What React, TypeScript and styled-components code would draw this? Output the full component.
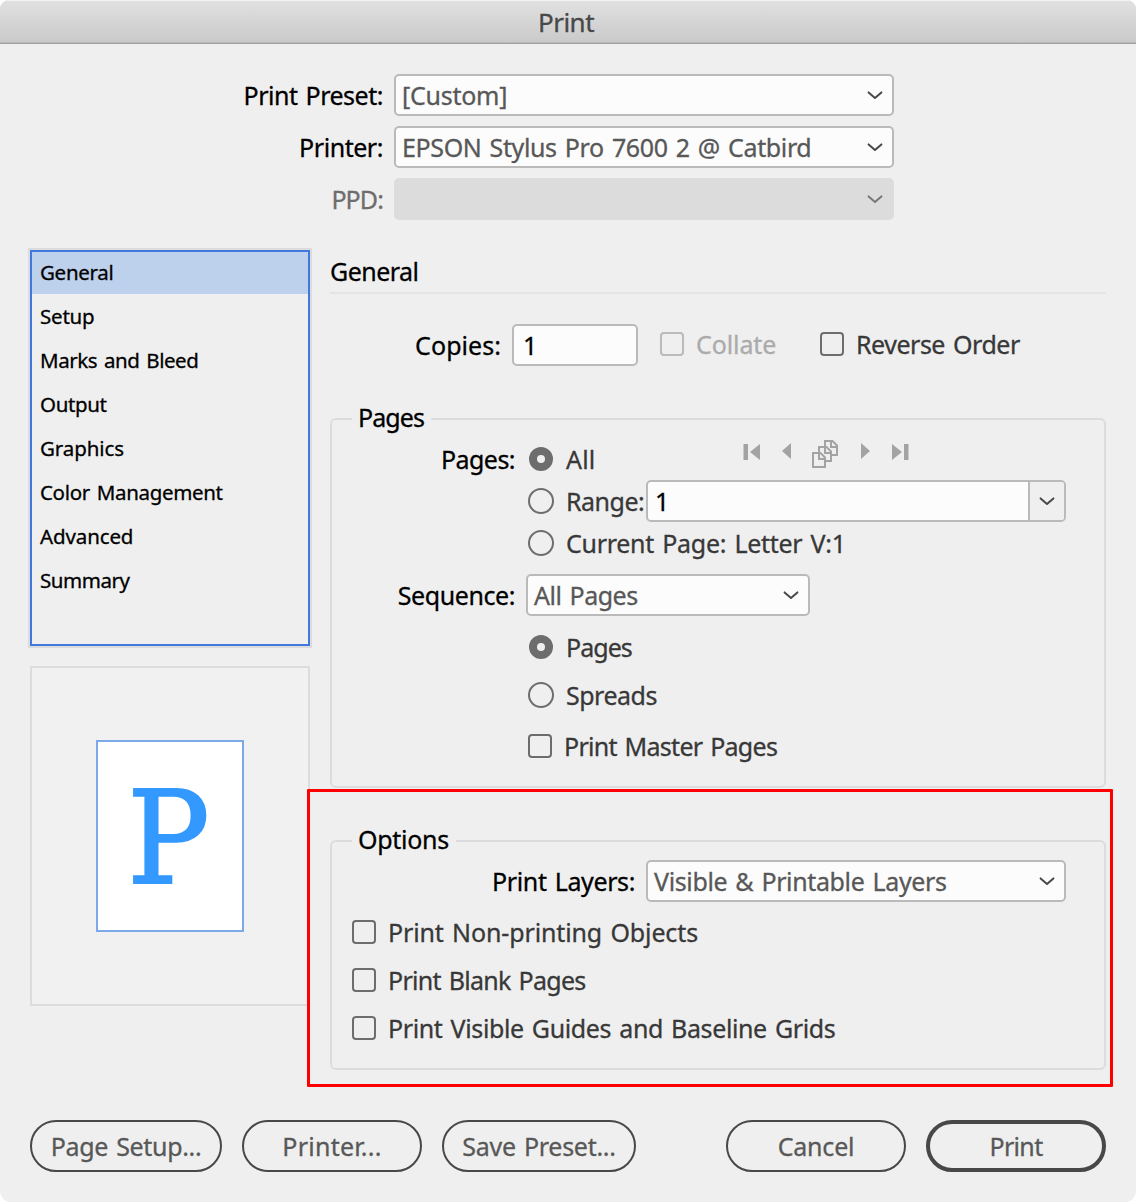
import React from "react";
import styled, { createGlobalStyle, css } from "styled-components";

const GlobalStyle = createGlobalStyle`
  * { box-sizing: border-box; }
  body {
    margin: 0;
    background: #fff;
    font-family: "Noto Sans", "Open Sans", sans-serif;
    font-size: 25px;
    line-height: 34px;
    color: #000;
  }
`;

const Dialog = styled.div`
  width: 1136px;
  height: 1202px;
  background: #efefef;
  border-radius: 9px 9px 11px 11px;
  overflow: hidden;
`;

const TitleBar = styled.header`
  display: flex;
  justify-content: center;
  height: 44px;
  padding-right: 4px;
  line-height: 44px;
  font-size: 26px;
  color: #484848;
  background: linear-gradient(#e1e1e1, #c9c9c9);
  box-shadow: inset 0 1px 0 #f4f4f4, inset 0 -1px 0 #a0a0a0, inset 0 -2px 0 #b9b9b9;
`;

const Text = styled.span<{ $ls?: number; $color?: string }>`
  white-space: pre;
  letter-spacing: ${(p) => p.$ls ?? 0}px;
  word-spacing: 2px;
  color: ${(p) => p.$color ?? "#000"};
  -webkit-text-stroke: 0.3px currentColor;
`;

const Body = styled.main`
  padding: 30px;
`;

const PresetGrid = styled.section`
  display: grid;
  grid-template-columns: 354px 500px;
  grid-auto-rows: 42px;
  gap: 10px;
  align-items: center;
`;

const Label = styled.div<{ $width?: number }>`
  display: flex;
  flex: none;
  justify-content: flex-end;
  width: ${(p) => (p.$width ? `${p.$width}px` : "auto")};
  padding-right: 1px;
`;

const boxed = css`
  height: 42px;
  border: 2px solid #bababa;
  border-radius: 5px;
  background: #fcfcfc;
`;

const SelectBox = styled.div<{ $width: number; $disabled?: boolean; $shift?: number }>`
  ${boxed}
  display: flex;
  flex: none;
  align-items: center;
  justify-content: space-between;
  width: ${(p) => p.$width}px;
  margin-left: ${(p) => p.$shift ?? 0}px;
  padding: 0 9px 0 6px;
  ${(p) => p.$disabled && "background: #dcdcdc; border-color: #dcdcdc;"}
`;

const NumberField = styled.div`
  ${boxed}
  display: flex;
  align-items: center;
  width: 126px;
  margin: 0 22px 0 10px;
  padding-left: 9px;
`;

const ComboField = styled.div`
  ${boxed}
  display: flex;
  align-items: stretch;
  width: 420px;
  overflow: hidden;
`;

const ComboInput = styled.div`
  display: flex;
  flex: 1;
  align-items: center;
  padding-left: 7px;
`;

const ComboButton = styled.div`
  display: flex;
  align-items: center;
  justify-content: center;
  width: 36px;
  border-left: 2px solid #bababa;
  background: #efefef;
`;

const Columns = styled.div`
  display: flex;
  gap: 20px;
  margin-top: 30px;
`;

const Sidebar = styled.aside`
  display: flex;
  flex: none;
  flex-direction: column;
  gap: 20px;
  width: 280px;
`;

const CategoryList = styled.nav`
  height: 396px;
  border: 2px solid #4178e0;
  box-shadow: 0 0 0 2px #dcdcdc;
  font-size: 20.5px;
`;

const Category = styled.div<{ $active?: boolean }>`
  height: ${(p) => (p.$active ? 42 : 44)}px;
  line-height: ${(p) => (p.$active ? 40 : 44)}px;
  padding-left: 8px;
  background: ${(p) => (p.$active ? "#bdd0ec" : "transparent")};
`;

const Preview = styled.div`
  display: flex;
  align-items: center;
  justify-content: center;
  height: 340px;
  border: 2px solid #dcdcdc;
  background: #f1f1f1;
`;

const Sheet = styled.div`
  display: flex;
  align-items: center;
  justify-content: center;
  width: 148px;
  height: 192px;
  padding: 4px 4px 0 0;
  border: 2px solid #7da8ea;
  background: #fff;
`;

const SheetLetter = styled.span`
  font-family: "DejaVu Serif", serif;
  font-size: 129px;
  line-height: 150px;
  color: #3399ff;
  -webkit-text-stroke: 2px #3399ff;
  transform: scaleX(0.95);
`;

const Panel = styled.section`
  width: 776px;
`;

const PanelTitle = styled.h2`
  margin: 0;
  height: 44px;
  font-size: 25px;
  font-weight: 400;
  line-height: 42px;
  border-bottom: 2px solid #e4e4e4;
`;

const CopiesRow = styled.div`
  display: flex;
  align-items: center;
  margin-top: 30px;
`;

const Group = styled.fieldset<{ $height: number }>`
  min-width: 0;
  height: ${(p) => p.$height}px;
  margin: 36px 0 0;
  padding: 2px 0 0;
  border: 2px solid #dcdcdc;
  border-radius: 6px;
`;

const Legend = styled.legend`
  height: 34px;
  margin-left: 20px;
  padding: 0 7px 3px 6px;
  line-height: 31px;
`;

const Row = styled.div<{ $top?: number; $indent?: number; $height?: number }>`
  display: flex;
  align-items: center;
  height: ${(p) => p.$height ?? 42}px;
  margin-top: ${(p) => p.$top ?? 0}px;
  padding-left: ${(p) => p.$indent ?? 0}px;
`;

const Choice = styled.label<{ $width?: number; $lift?: boolean }>`
  display: flex;
  flex: none;
  align-items: center;
  gap: 12px;
  width: ${(p) => (p.$width ? `${p.$width}px` : "auto")};
  padding-bottom: ${(p) => (p.$lift ? 2 : 0)}px;
`;

const Checkbox = styled.span<{ $disabled?: boolean }>`
  flex: none;
  width: 24px;
  height: 24px;
  border: 2px solid ${(p) => (p.$disabled ? "#bababa" : "#6d6d6d")};
  border-radius: 4px;
`;

const Radio = styled.span<{ $on?: boolean }>`
  flex: none;
  width: ${(p) => (p.$on ? 24 : 26)}px;
  height: ${(p) => (p.$on ? 24 : 26)}px;
  margin: 0 ${(p) => (p.$on ? 1 : 0)}px;
  border: ${(p) => (p.$on ? 8 : 2)}px solid #6d6d6d;
  border-radius: 50%;
`;

const PageNav = styled.div`
  display: flex;
  align-self: flex-start;
  gap: 21px;
  margin-top: 2px;
  svg { display: block; }
`;

const OptionsArea = styled.div`
  position: relative;
`;

const Highlight = styled.div`
  position: absolute;
  top: -35px;
  left: -23px;
  width: 806px;
  height: 298px;
  border: 3px solid #ff0000;
  border-radius: 1px;
  pointer-events: none;
`;

const Footer = styled.footer`
  display: flex;
  gap: 20px;
  margin-top: 50px;
`;

const PillButton = styled.button<{ $width: number; $primary?: boolean; $push?: boolean }>`
  width: ${(p) => p.$width}px;
  height: 52px;
  margin: 0 0 0 ${(p) => (p.$push ? "auto" : "0")};
  padding: 0;
  border: ${(p) => (p.$primary ? 4 : 2)}px solid #484848;
  border-radius: 26px;
  background: transparent;
  font: inherit;
  line-height: 34px;
`;

const ChevronIcon = styled.svg`
  flex: none;
  margin-top: 1px;
`;

const MUTED = "#585858";
const SOFT = "#383838";
const ICON = "#a3a3a3";

const Chevron = ({ color = "#484848" }: { color?: string }) => (
  <ChevronIcon width="16" height="11" viewBox="0 0 16 11" fill="none" stroke={color} strokeWidth="2">
    <path d="M1.6 2.4 L8 7.9 L14.4 2.4" strokeLinecap="round" strokeLinejoin="round" />
  </ChevronIcon>
);

const SheetShape = ({ x, y }: { x: number; y: number }) => (
  <g transform={`translate(${x} ${y})`} stroke={ICON} strokeWidth="2" fill="#efefef">
    <path d="M1 1H8.5L13 5.5V15H1Z" />
    <path d="M7 1V7H13" fill="none" />
  </g>
);

const categories: [string, number][] = [
  ["General", -0.3],
  ["Setup", -0.2],
  ["Marks and Bleed", -0.45],
  ["Output", -0.35],
  ["Graphics", -0.08],
  ["Color Management", -0.34],
  ["Advanced", -0.12],
  ["Summary", -0.45],
];

const optionChecks: [string, number][] = [
  ["Print Non-printing Objects", -0.13],
  ["Print Blank Pages", -0.7],
  ["Print Visible Guides and Baseline Grids", -0.38],
];

export default function App() {
  return (
    <>
      <GlobalStyle />
      <Dialog>
        <TitleBar>
          <Text $ls={-0.51} $color="#484848">Print</Text>
        </TitleBar>
        <Body>
          <PresetGrid>
            <Label><Text $ls={-0.48}>Print Preset:</Text></Label>
            <SelectBox $width={500}>
              <Text $ls={-0.25} $color={MUTED}>[Custom]</Text>
              <Chevron />
            </SelectBox>
            <Label><Text $ls={-0.45}>Printer:</Text></Label>
            <SelectBox $width={500}>
              <Text $ls={-0.37} $color={MUTED}>EPSON Stylus Pro 7600 2 @ Catbird</Text>
              <Chevron />
            </SelectBox>
            <Label><Text $ls={-0.9} $color="#6d6d6d">PPD:</Text></Label>
            <SelectBox $width={500} $disabled>
              <span />
              <Chevron color="#777" />
            </SelectBox>
          </PresetGrid>

          <Columns>
            <Sidebar>
              <CategoryList>
                {categories.map(([name, ls], i) => (
                  <Category key={name} $active={i === 0}>
                    <Text $ls={ls}>{name}</Text>
                  </Category>
                ))}
              </CategoryList>
              <Preview>
                <Sheet><SheetLetter>P</SheetLetter></Sheet>
              </Preview>
            </Sidebar>

            <Panel>
              <PanelTitle><Text $ls={-0.53}>General</Text></PanelTitle>
              <CopiesRow>
                <Label $width={172}><Text $ls={0.05}>Copies:</Text></Label>
                <NumberField><Text>1</Text></NumberField>
                <Choice $width={160} $lift>
                  <Checkbox $disabled />
                  <Text $ls={-0.1} $color="#ababab">Collate</Text>
                </Choice>
                <Choice $lift>
                  <Checkbox />
                  <Text $ls={-0.48} $color={SOFT}>Reverse Order</Text>
                </Choice>
              </CopiesRow>

              <Group $height={386}>
                <Legend><Text $ls={-0.9}>Pages</Text></Legend>
                <Row>
                  <Label $width={184}><Text $ls={-0.55}>Pages:</Text></Label>
                  <Row $indent={12}>
                    <Choice $width={214}>
                      <Radio $on />
                      <Text $ls={0.2} $color={SOFT}>All</Text>
                    </Choice>
                    <PageNav>
                      <svg width="19" height="28" fill={ICON}>
                        <rect x="1.5" y="4" width="4.5" height="16" />
                        <path d="M18 4V20L8 12Z" />
                      </svg>
                      <svg width="9" height="28" fill={ICON}>
                        <path d="M9 3V19L0 11Z" />
                      </svg>
                      <svg width="28" height="28">
                        <SheetShape x={12} y={0} />
                        <SheetShape x={6} y={6} />
                        <SheetShape x={0} y={12} />
                      </svg>
                      <svg width="10" height="28" fill={ICON}>
                        <path d="M0 3V19L9 11Z" />
                      </svg>
                      <svg width="18" height="28" fill={ICON}>
                        <path d="M0 4V20L10 12Z" />
                        <rect x="12" y="4" width="4.5" height="16" />
                      </svg>
                    </PageNav>
                  </Row>
                </Row>
                <Row $indent={196}>
                  <Choice $width={118}>
                    <Radio />
                    <Text $ls={-0.5} $color={SOFT}>Range:</Text>
                  </Choice>
                  <ComboField>
                    <ComboInput><Text>1</Text></ComboInput>
                    <ComboButton><Chevron /></ComboButton>
                  </ComboField>
                </Row>
                <Row $indent={196}>
                  <Choice>
                    <Radio />
                    <Text $ls={-0.28} $color={SOFT}>Current Page: Letter V:1</Text>
                  </Choice>
                </Row>
                <Row $top={10}>
                  <Label $width={184}><Text $ls={-0.42}>Sequence:</Text></Label>
                  <SelectBox $width={284} $shift={10}>
                    <Text $ls={-0.47} $color={MUTED}>All Pages</Text>
                    <Chevron />
                  </SelectBox>
                </Row>
                <Row $top={10} $indent={196}>
                  <Choice>
                    <Radio $on />
                    <Text $ls={-0.95} $color={SOFT}>Pages</Text>
                  </Choice>
                </Row>
                <Row $top={6} $indent={196}>
                  <Choice>
                    <Radio />
                    <Text $ls={-0.5} $color={SOFT}>Spreads</Text>
                  </Choice>
                </Row>
                <Row $top={9} $indent={196}>
                  <Choice>
                    <Checkbox />
                    <Text $ls={-0.72} $color={SOFT}>Print Master Pages</Text>
                  </Choice>
                </Row>
              </Group>

              <OptionsArea>
                <Group $height={246}>
                  <Legend><Text $ls={-0.3}>Options</Text></Legend>
                  <Row>
                    <Label $width={304}><Text $ls={-0.38}>Print Layers:</Text></Label>
                    <SelectBox $width={420} $shift={10}>
                      <Text $ls={-0.37} $color={MUTED}>{"Visible & Printable Layers"}</Text>
                      <Chevron />
                    </SelectBox>
                  </Row>
                  {optionChecks.map(([name, ls], i) => (
                    <Row key={name} $height={48} $indent={20} $top={i === 0 ? 6 : 0}>
                      <Choice>
                        <Checkbox />
                        <Text $ls={ls} $color={SOFT}>{name}</Text>
                      </Choice>
                    </Row>
                  ))}
                </Group>
                <Highlight />
              </OptionsArea>
            </Panel>
          </Columns>

          <Footer>
            <PillButton $width={192}><Text $ls={-0.33} $color={MUTED}>Page Setup...</Text></PillButton>
            <PillButton $width={180}><Text $ls={0.25} $color={MUTED}>Printer...</Text></PillButton>
            <PillButton $width={194}><Text $ls={-0.28} $color={MUTED}>Save Preset...</Text></PillButton>
            <PillButton $width={180} $push><Text $ls={-0.2} $color={MUTED}>Cancel</Text></PillButton>
            <PillButton $width={180} $primary><Text $ls={-0.65} $color={MUTED}>Print</Text></PillButton>
          </Footer>
        </Body>
      </Dialog>
    </>
  );
}
